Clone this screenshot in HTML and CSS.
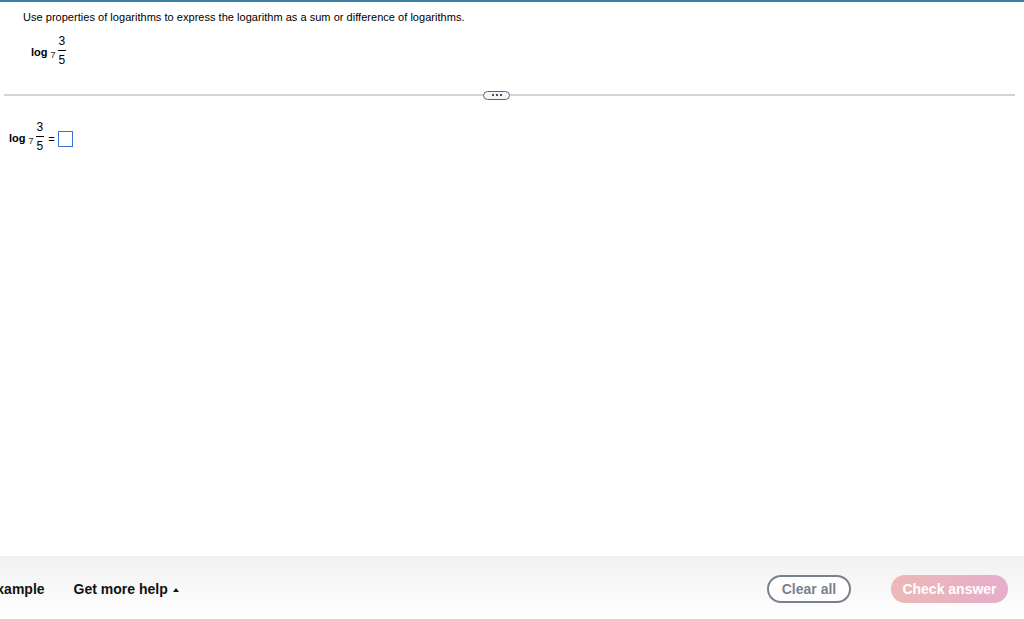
FILE: index.html
```html
<!DOCTYPE html>
<html>
<head>
<meta charset="utf-8">
<link rel="stylesheet" href="styles.css">
</head>
<body>
<div class="page">
  <div class="topbar"></div>
  <div class="question">
    <p class="instr">Use properties of logarithms to express the logarithm as a sum or difference of logarithms.</p>
    <div class="expr q-expr">
      <span class="log">log</span><span class="base">7</span>
      <span class="frac"><span class="num">3</span><span class="den">5</span></span>
    </div>
  </div>
  <div class="divider">
    <span class="line left"></span>
    <span class="pill"><i></i><i></i><i></i></span>
    <span class="line right"></span>
  </div>
  <div class="answer">
    <div class="expr">
      <span class="log">log</span><span class="base">7</span>
      <span class="frac"><span class="num">3</span><span class="den">5</span></span>
      <span class="eq">=</span>
      <span class="box"></span>
    </div>
  </div>
  <div class="spacer"></div>
  <div class="footer">
    <span class="link example">Example</span>
    <span class="link help">Get more help <span class="caret"></span></span>
    <span class="grow"></span>
    <button class="btn clear">Clear all</button>
    <button class="btn check">Check answer</button>
  </div>
</div>
</body>
</html>
```

FILE: styles.css
```css
html, body {
  margin: 0;
  padding: 0;
  background: #fff;
}
body {
  font-family: "Liberation Sans", Arial, sans-serif;
  color: #000;
}
.page {
  width: 1024px;
  height: 619px;
  display: flex;
  flex-direction: column;
  overflow: hidden;
}
.topbar {
  height: 2px;
  background: #3a7fa6;
  flex: none;
}
.question {
  padding: 8px 0 0 23px;
}
.instr {
  margin: 0;
  font-size: 11px;
  line-height: 14px;
  letter-spacing: 0.03px;
}
.expr {
  display: flex;
  align-items: center;
  font-size: 11px;
}
.q-expr {
  margin: 11px 0 0 8px;
}
.log {
  font-weight: bold;
  font-size: 11px;
  margin-top: 3px;
}
.base {
  font-size: 9px;
  margin: 9px 2px 0 3px;
  color: #222;
}
.frac {
  display: inline-flex;
  flex-direction: column;
  align-items: center;
  font-size: 12px;
  line-height: 12px;
}
.num {
  padding: 0 1px 3px;
  border-bottom: 1px solid #000;
}
.den {
  padding-top: 3px;
}
.divider {
  display: flex;
  align-items: center;
  margin: 24px 9px 0 4px;
  height: 10px;
}
.line {
  height: 2px;
  background: #d3d4d8;
}
.line.left {
  width: 479px;
  flex: none;
}
.line.right {
  flex: 1;
}
.pill {
  width: 25px;
  height: 7px;
  border: 1px solid #5d6678;
  border-radius: 5px;
  background: #f3f4f6;
  display: flex;
  align-items: center;
  justify-content: center;
  gap: 2px;
  flex: none;
}
.pill i {
  width: 2px;
  height: 2px;
  background: #4a5264;
  display: block;
}
.answer {
  padding: 21px 0 0 9px;
}
.eq {
  margin: 4px 3px 0 4px;
  font-size: 11px;
}
.box {
  width: 13px;
  height: 14px;
  border: 1px solid #3b6fd1;
  margin-top: 4px;
}
.spacer {
  flex: 1;
}
.footer {
  height: 61px;
  flex: none;
  background: linear-gradient(to bottom, #f1f1f1, #ffffff);
  display: flex;
  align-items: center;
  padding: 2px 16px 0 0;
}
.link {
  font-size: 14px;
  font-weight: bold;
  color: #111;
}
.example {
  margin-left: -13px;
}
.help {
  margin-left: 29px;
  display: flex;
  align-items: center;
}
.caret {
  display: inline-block;
  width: 0;
  height: 0;
  border-left: 3px solid transparent;
  border-right: 3px solid transparent;
  border-bottom: 4px solid #111;
  margin-left: 5px;
  margin-top: 2px;
}
.grow {
  flex: 1;
}
.btn {
  font-family: "Liberation Sans", Arial, sans-serif;
  font-size: 14px;
  font-weight: bold;
  height: 28px;
  border-radius: 14px;
  padding: 0;
}
.clear {
  width: 84px;
  border: 2px solid #7b808d;
  background: #fff;
  color: #7b7f8e;
  margin-right: 40px;
}
.check {
  width: 117px;
  border: none;
  background: linear-gradient(to right, #edb8b6, #e5aecb);
  color: #fff;
}
```
